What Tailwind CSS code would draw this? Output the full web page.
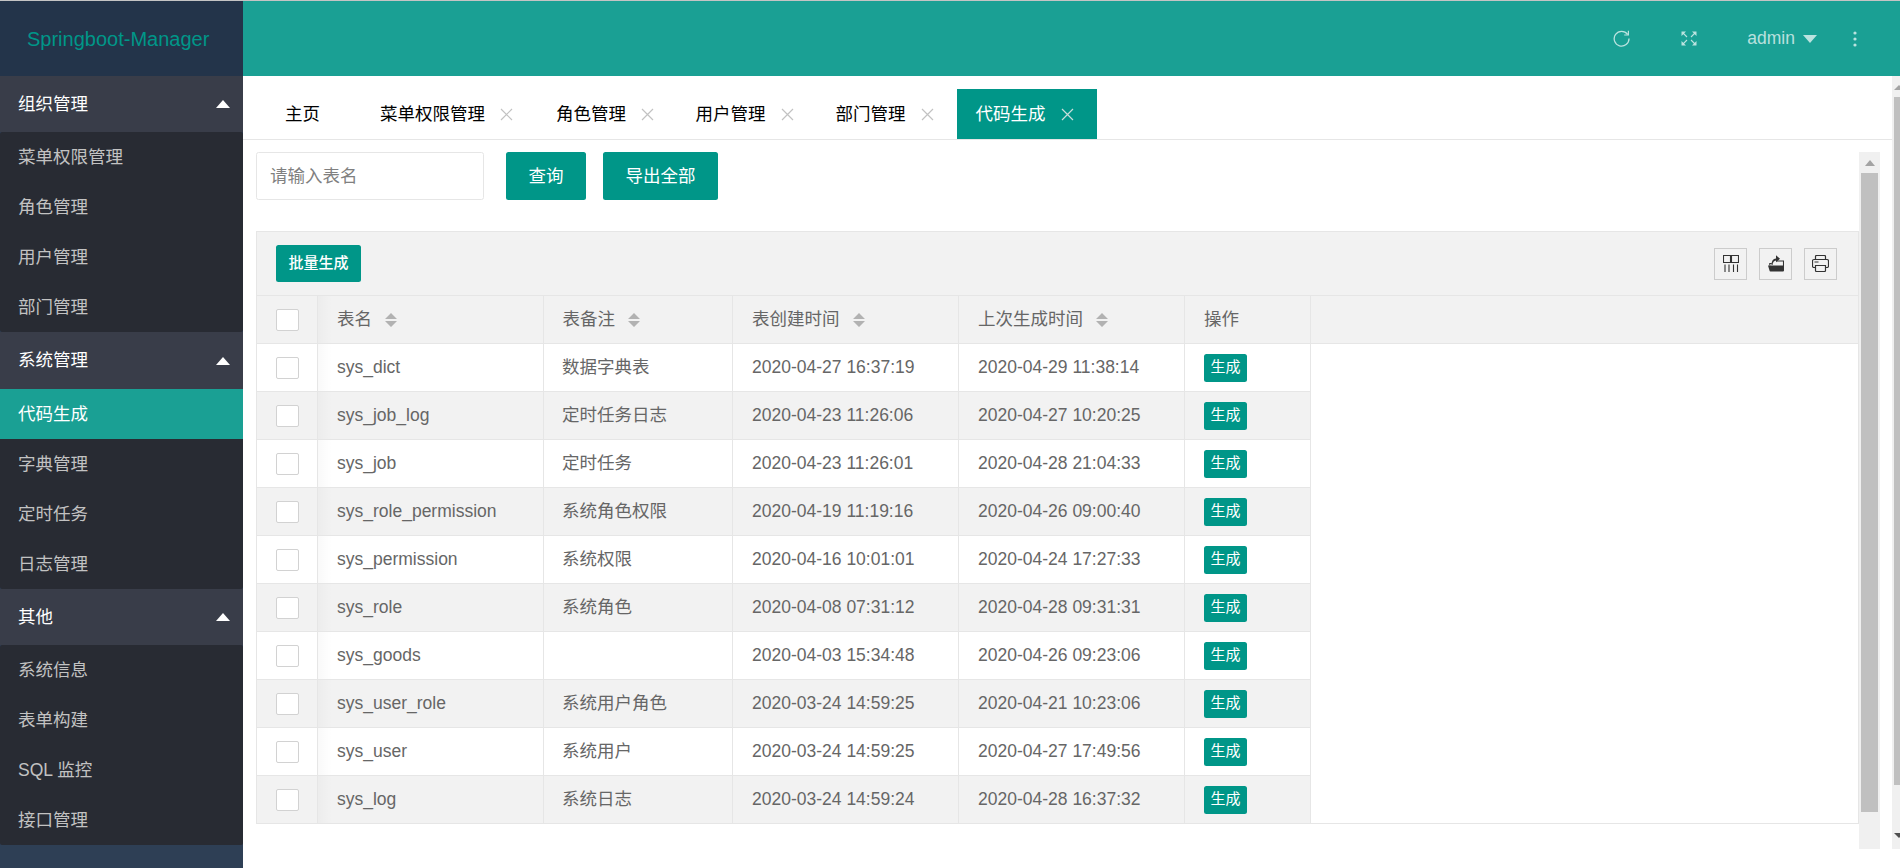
<!DOCTYPE html>
<html lang="zh">
<head>
<meta charset="utf-8">
<title>Springboot-Manager</title>
<script src="https://cdn.jsdelivr.net/npm/@tailwindcss/browser@4"></script>
</head>
<body class="h-[868px] overflow-hidden bg-white border-t border-[#c4c4c4] font-['Liberation_Sans','Noto_Sans_CJK_SC',sans-serif] text-[17.5px] text-[#666]">
<div class="flex h-[867px]">
  <aside class="w-[243px] shrink-0 bg-[#2e3f55] text-[#c2c2c2]">
    <div class="h-[75px] bg-[#23344a] pl-[27px] flex items-center text-[#009688] text-[20px]">Springboot-Manager</div>
    <div class="h-[56px] bg-[#393d49] px-[18px] flex items-center justify-between text-white"><span>组织管理</span><span class="w-0 h-0 mr-[-5px] border-x-[7.5px] border-x-transparent border-b-[8px] border-b-white"></span></div>
    <nav class="bg-[#282b33] rounded-[2px]">
      <a class="h-[50px] pl-[18px] flex items-center">菜单权限管理</a>
      <a class="h-[50px] pl-[18px] flex items-center">角色管理</a>
      <a class="h-[50px] pl-[18px] flex items-center">用户管理</a>
      <a class="h-[50px] pl-[18px] flex items-center">部门管理</a>
    </nav>
    <div class="h-[57px] bg-[#393d49] px-[18px] flex items-center justify-between text-white"><span>系统管理</span><span class="w-0 h-0 mr-[-5px] border-x-[7.5px] border-x-transparent border-b-[8px] border-b-white"></span></div>
    <nav class="bg-[#282b33] rounded-[2px]">
      <a class="h-[50px] pl-[18px] flex items-center bg-[#1aa094] text-white">代码生成</a>
      <a class="h-[50px] pl-[18px] flex items-center">字典管理</a>
      <a class="h-[50px] pl-[18px] flex items-center">定时任务</a>
      <a class="h-[50px] pl-[18px] flex items-center">日志管理</a>
    </nav>
    <div class="h-[56px] bg-[#393d49] px-[18px] flex items-center justify-between text-white"><span>其他</span><span class="w-0 h-0 mr-[-5px] border-x-[7.5px] border-x-transparent border-b-[8px] border-b-white"></span></div>
    <nav class="bg-[#282b33] rounded-[2px]">
      <a class="h-[50px] pl-[18px] flex items-center">系统信息</a>
      <a class="h-[50px] pl-[18px] flex items-center">表单构建</a>
      <a class="h-[50px] pl-[18px] flex items-center">SQL 监控</a>
      <a class="h-[50px] pl-[18px] flex items-center">接口管理</a>
    </nav>
  </aside>

  <div class="flex-1 min-w-0 flex flex-col">
    <header class="h-[75px] shrink-0 bg-[#1aa094] flex items-center text-white/70">
      <div class="flex-1"></div>
      <svg class="w-[17px] h-[17px] mr-[51px]" viewBox="0 0 17 17" fill="none" stroke="currentColor" stroke-width="1.3"><path d="M14.600 4.400A7.400 7.400 0 1 0 16 8.500"/><path d="M15.400 0.800v4.200h-4.200" stroke-width="1.200"/></svg>
      <svg class="w-[16px] h-[15px] mr-[50px]" viewBox="0 0 16 15" fill="currentColor" stroke="none"><path d="M0.500 0.500h4.500L0.500 5zM15.500 0.500v4.500L11 0.500zM0.500 14.500V10L5 14.500zM15.500 14.500H11L15.500 10z"/><path d="M2.500 2.500L6 6M13.500 2.500L10 6M2.500 12.500L6 9M13.500 12.500L10 9" fill="none" stroke="currentColor" stroke-width="1.100"/></svg>
      <span class="mr-[8px] leading-none">admin</span>
      <span class="w-0 h-0 mr-[36px] border-x-[7px] border-x-transparent border-t-[8px] border-t-white/70"></span>
      <svg class="w-[4px] h-[16px] mr-[43px]" viewBox="0 0 4 16" fill="currentColor"><circle cx="2" cy="2" r="1.600"/><circle cx="2" cy="8" r="1.600"/><circle cx="2" cy="14" r="1.600"/></svg>
    </header>

    <div class="flex flex-1 min-h-0">
      <main class="flex-1 min-w-0">
        <div class="h-[64px] border-b border-[#e6e6e6] flex items-end text-black">
          <div class="w-[118px] h-[50px] pl-[42px] flex items-center">主页</div>
          <div class="w-[176px] h-[50px] pl-[19px] flex items-center">菜单权限管理<svg class="w-[13px] h-[13px] ml-[15px] text-[#c2c2c2]" viewBox="0 0 13 13" stroke="currentColor" stroke-width="1.2"><path d="M1 1l11 11M12 1L1 12"/></svg></div>
          <div class="w-[140px] h-[50px] pl-[19px] flex items-center">角色管理<svg class="w-[13px] h-[13px] ml-[15px] text-[#c2c2c2]" viewBox="0 0 13 13" stroke="currentColor" stroke-width="1.2"><path d="M1 1l11 11M12 1L1 12"/></svg></div>
          <div class="w-[140px] h-[50px] pl-[18.500px] flex items-center">用户管理<svg class="w-[13px] h-[13px] ml-[15.500px] text-[#c2c2c2]" viewBox="0 0 13 13" stroke="currentColor" stroke-width="1.2"><path d="M1 1l11 11M12 1L1 12"/></svg></div>
          <div class="w-[140px] h-[50px] pl-[18.500px] flex items-center">部门管理<svg class="w-[13px] h-[13px] ml-[15.500px] text-[#c2c2c2]" viewBox="0 0 13 13" stroke="currentColor" stroke-width="1.2"><path d="M1 1l11 11M12 1L1 12"/></svg></div>
          <div class="w-[140px] h-[50px] pl-[18.500px] flex items-center bg-[#009688] text-white">代码生成<svg class="w-[13px] h-[13px] ml-[15.500px] text-[#c9dedb]" viewBox="0 0 13 13" stroke="currentColor" stroke-width="1.2"><path d="M1 1l11 11M12 1L1 12"/></svg></div>
        </div>

        <div class="flex pl-[13px] pr-[12px] pt-[12px]">
          <div class="flex-1 min-w-0">
            <div class="flex h-[48px]">
              <input class="w-[228px] h-[48px] px-[13px] border border-[#e6e6e6] rounded-[2.5px] outline-none placeholder:text-[#808080]" placeholder="请输入表名">
              <button class="w-[80px] h-[48px] ml-[22px] bg-[#009688] text-white rounded-[2.5px]">查询</button>
              <button class="w-[115px] h-[48px] ml-[17px] bg-[#009688] text-white rounded-[2.5px]">导出全部</button>
            </div>

            <div class="mt-[31px] border-x border-b border-[#e6e6e6]">
              <div class="h-[65px] border-y border-[#e6e6e6] bg-[#f2f2f2] flex items-center pl-[19px] pr-[21px]">
                <button class="w-[85px] h-[37px] bg-[#009688] text-white text-[15px] font-medium rounded-[2.5px]">批量生成</button>
                <div class="flex-1"></div>
                <span class="w-[33px] h-[32px] border border-[#ccc] flex items-center justify-center text-[#333]">
                  <svg class="w-[16px] h-[17px]" viewBox="0 0 16 17" fill="none" stroke="currentColor" stroke-width="1.1"><path d="M0.500 0.500h7v7h-7zM8.500 0.500h7v7h-7zM2 9.500V17M6 9.500V17M10.500 9.500V17M14.500 9.500V17"/></svg>
                </span>
                <span class="w-[33px] h-[32px] ml-[12px] border border-[#ccc] flex items-center justify-center text-[#333]">
                  <svg class="w-[16px] h-[17px]" viewBox="0 0 16 17" fill="currentColor"><path d="M0 10.500h16v5a1 1 0 0 1-1 1H2.500a1 1 0 0 1-1-1z"/><path d="M1.800 10.500V8.500h2M8.500 6h7v5" fill="none" stroke="currentColor" stroke-width="1.100"/><path d="M3.500 10C3.500 6 5 3.800 8 3.500V0.300L12 3.800 8 7.300V5.500C6 5.700 4.800 7.300 4.500 10z"/></svg>
                </span>
                <span class="w-[33px] h-[32px] ml-[12px] border border-[#ccc] flex items-center justify-center text-[#333]">
                  <svg class="w-[17px] h-[17px]" viewBox="0 0 17 17" fill="none" stroke="currentColor" stroke-width="1.2"><path d="M3.500 4.500V1.500a1 1 0 0 1 1-1h8a1 1 0 0 1 1 1v3M3.500 12.500H2a1.500 1.500 0 0 1-1.500-1.500V6A1.500 1.500 0 0 1 2 4.500h13A1.500 1.500 0 0 1 16.500 6v5a1.500 1.500 0 0 1-1.500 1.500h-1.500"/><path d="M3.500 10.500h10v5a1 1 0 0 1-1 1h-8a1 1 0 0 1-1-1zM2.500 7h4" /></svg>
                </span>
              </div>

              <div class="h-[48px] bg-[#f2f2f2] border-b border-[#e6e6e6] grid grid-cols-[61px_226px_189px_226px_226px_126px]">
                <div class="border-r border-[#e6e6e6] flex items-center pl-[19px]"><span class="w-[23px] h-[22px] bg-white border border-[#d2d2d2] rounded-[2px]"></span></div>
                <div class="border-r border-[#e6e6e6] flex items-center pl-[19px] bg-[linear-gradient(to_right,rgba(0,0,0,.025),transparent_14px)]">表名<svg class="w-[12px] h-[14px] ml-[13px]" viewBox="0 0 12 14" fill="#b2b2b2"><path d="M6 0l6 6H0zM0 8h12l-6 6z"/></svg></div>
                <div class="border-r border-[#e6e6e6] flex items-center pl-[18.500px]">表备注<svg class="w-[12px] h-[14px] ml-[13px]" viewBox="0 0 12 14" fill="#b2b2b2"><path d="M6 0l6 6H0zM0 8h12l-6 6z"/></svg></div>
                <div class="border-r border-[#e6e6e6] flex items-center pl-[19px]">表创建时间<svg class="w-[12px] h-[14px] ml-[13px]" viewBox="0 0 12 14" fill="#b2b2b2"><path d="M6 0l6 6H0zM0 8h12l-6 6z"/></svg></div>
                <div class="border-r border-[#e6e6e6] flex items-center pl-[19px]">上次生成时间<svg class="w-[12px] h-[14px] ml-[13px]" viewBox="0 0 12 14" fill="#b2b2b2"><path d="M6 0l6 6H0zM0 8h12l-6 6z"/></svg></div>
                <div class="border-r border-[#e6e6e6] flex items-center pl-[19px]">操作</div>
              </div>

              <div class="grid grid-cols-[61px_226px_189px_226px_226px_126px] grid-rows-[repeat(9,48px)_47px] w-fit [&>div]:border-r [&>div]:border-b [&>div]:border-[#e6e6e6] [&>div]:flex [&>div]:items-center [&>div]:pl-[19px] [&>div:nth-last-child(-n+6)]:border-b-0 [&>.a]:bg-[#f2f2f2] [&>.c]:pl-[18px]">
                <div><span class="w-[23px] h-[22px] bg-white border border-[#d2d2d2] rounded-[2px]"></span></div><div class="bg-[linear-gradient(to_right,rgba(0,0,0,.025),transparent_14px)]">sys_dict</div><div class="c">数据字典表</div><div>2020-04-27 16:37:19</div><div>2020-04-29 11:38:14</div><div><button class="w-[43px] h-[28px] bg-[#009688] text-white text-[15px] rounded-[2.5px]">生成</button></div>

                <div class="a"><span class="w-[23px] h-[22px] bg-white border border-[#d2d2d2] rounded-[2px]"></span></div><div class="a bg-[linear-gradient(to_right,rgba(0,0,0,.025),transparent_14px)]">sys_job_log</div><div class="a c">定时任务日志</div><div class="a">2020-04-23 11:26:06</div><div class="a">2020-04-27 10:20:25</div><div class="a"><button class="w-[43px] h-[28px] bg-[#009688] text-white text-[15px] rounded-[2.5px]">生成</button></div>

                <div><span class="w-[23px] h-[22px] bg-white border border-[#d2d2d2] rounded-[2px]"></span></div><div class="bg-[linear-gradient(to_right,rgba(0,0,0,.025),transparent_14px)]">sys_job</div><div class="c">定时任务</div><div>2020-04-23 11:26:01</div><div>2020-04-28 21:04:33</div><div><button class="w-[43px] h-[28px] bg-[#009688] text-white text-[15px] rounded-[2.5px]">生成</button></div>

                <div class="a"><span class="w-[23px] h-[22px] bg-white border border-[#d2d2d2] rounded-[2px]"></span></div><div class="a bg-[linear-gradient(to_right,rgba(0,0,0,.025),transparent_14px)]">sys_role_permission</div><div class="a c">系统角色权限</div><div class="a">2020-04-19 11:19:16</div><div class="a">2020-04-26 09:00:40</div><div class="a"><button class="w-[43px] h-[28px] bg-[#009688] text-white text-[15px] rounded-[2.5px]">生成</button></div>

                <div><span class="w-[23px] h-[22px] bg-white border border-[#d2d2d2] rounded-[2px]"></span></div><div class="bg-[linear-gradient(to_right,rgba(0,0,0,.025),transparent_14px)]">sys_permission</div><div class="c">系统权限</div><div>2020-04-16 10:01:01</div><div>2020-04-24 17:27:33</div><div><button class="w-[43px] h-[28px] bg-[#009688] text-white text-[15px] rounded-[2.5px]">生成</button></div>

                <div class="a"><span class="w-[23px] h-[22px] bg-white border border-[#d2d2d2] rounded-[2px]"></span></div><div class="a bg-[linear-gradient(to_right,rgba(0,0,0,.025),transparent_14px)]">sys_role</div><div class="a c">系统角色</div><div class="a">2020-04-08 07:31:12</div><div class="a">2020-04-28 09:31:31</div><div class="a"><button class="w-[43px] h-[28px] bg-[#009688] text-white text-[15px] rounded-[2.5px]">生成</button></div>

                <div><span class="w-[23px] h-[22px] bg-white border border-[#d2d2d2] rounded-[2px]"></span></div><div class="bg-[linear-gradient(to_right,rgba(0,0,0,.025),transparent_14px)]">sys_goods</div><div class="c"></div><div>2020-04-03 15:34:48</div><div>2020-04-26 09:23:06</div><div><button class="w-[43px] h-[28px] bg-[#009688] text-white text-[15px] rounded-[2.5px]">生成</button></div>

                <div class="a"><span class="w-[23px] h-[22px] bg-white border border-[#d2d2d2] rounded-[2px]"></span></div><div class="a bg-[linear-gradient(to_right,rgba(0,0,0,.025),transparent_14px)]">sys_user_role</div><div class="a c">系统用户角色</div><div class="a">2020-03-24 14:59:25</div><div class="a">2020-04-21 10:23:06</div><div class="a"><button class="w-[43px] h-[28px] bg-[#009688] text-white text-[15px] rounded-[2.5px]">生成</button></div>

                <div><span class="w-[23px] h-[22px] bg-white border border-[#d2d2d2] rounded-[2px]"></span></div><div class="bg-[linear-gradient(to_right,rgba(0,0,0,.025),transparent_14px)]">sys_user</div><div class="c">系统用户</div><div>2020-03-24 14:59:25</div><div>2020-04-27 17:49:56</div><div><button class="w-[43px] h-[28px] bg-[#009688] text-white text-[15px] rounded-[2.5px]">生成</button></div>

                <div class="a"><span class="w-[23px] h-[22px] bg-white border border-[#d2d2d2] rounded-[2px]"></span></div><div class="a bg-[linear-gradient(to_right,rgba(0,0,0,.025),transparent_14px)]">sys_log</div><div class="a c">系统日志</div><div class="a">2020-03-24 14:59:24</div><div class="a">2020-04-28 16:37:32</div><div class="a"><button class="w-[43px] h-[28px] bg-[#009688] text-white text-[15px] rounded-[2.5px]">生成</button></div>
              </div>
            </div>
          </div>

          <div class="w-[21px] h-[697px] shrink-0 bg-[#f0f0f0] flex flex-col items-center">
            <span class="mt-[8px] w-0 h-0 border-x-[5px] border-x-transparent border-b-[6px] border-b-[#a3a3a3]"></span>
            <span class="mt-[7px] w-[17px] h-[639px] bg-[#c0c0c0]"></span>
          </div>
        </div>
      </main>

      <div class="w-[8px] h-[773px] shrink-0 bg-[#f0f0f0] relative overflow-hidden">
        <span class="block ml-[2px] mt-[21px] w-[6px] h-[688px] bg-[#c0c0c0]"></span>
        <span class="absolute left-[2px] top-[9px] w-0 h-0 border-x-[5px] border-x-transparent border-b-[5px] border-b-[#a3a3a3]"></span>
        <span class="absolute left-[2px] top-[757px] w-0 h-0 border-x-[5px] border-x-transparent border-t-[5px] border-t-[#505050]"></span>
      </div>
    </div>
  </div>
</div>
</body>
</html>
